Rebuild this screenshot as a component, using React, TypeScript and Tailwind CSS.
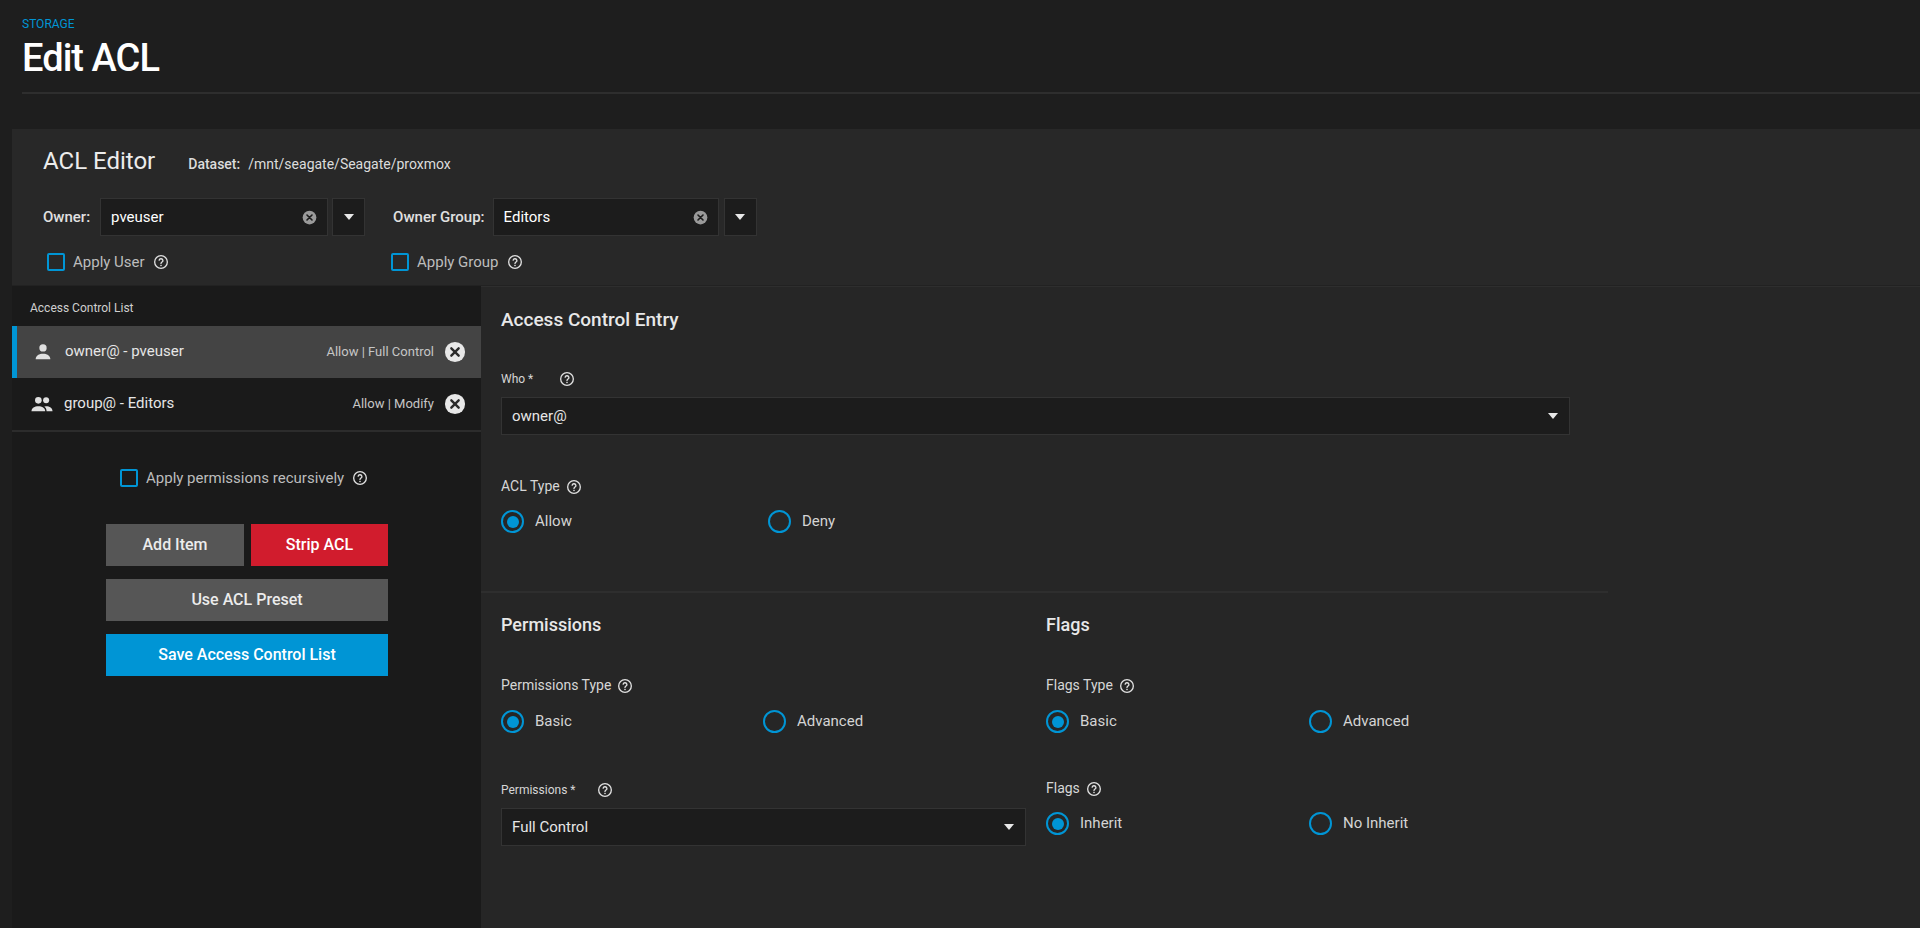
import React from 'react';

const Help = () => (
  <svg width="16" height="16" viewBox="0 0 24 24" className="inline-block shrink-0 text-[#e0e0e0]">
    <circle cx="12" cy="12" r="9.5" fill="none" stroke="currentColor" strokeWidth="2" />
    <path d="M9.2 9.3a2.9 2.9 0 0 1 5.7.7c0 1.9-2.9 2.4-2.9 4.3" fill="none" stroke="currentColor" strokeWidth="2" strokeLinecap="round" />
    <circle cx="12" cy="17.3" r="1.2" fill="currentColor" />
  </svg>
);

const Caret = () => (
  <svg width="12" height="8" viewBox="0 0 12 8"><path d="M1 1h10L6 7z" fill="#e8e8e8" /></svg>
);

const ClearIcon = () => (
  <svg width="15" height="15" viewBox="0 0 24 24">
    <circle cx="12" cy="12" r="11" fill="#9a9a9a" />
    <path d="M8 8l8 8M16 8l-8 8" stroke="#1c1c1c" strokeWidth="2.6" strokeLinecap="round" />
  </svg>
);

const RemoveIcon = () => (
  <svg width="22" height="22" viewBox="0 0 24 24">
    <circle cx="12" cy="12" r="11" fill="#e8e8e8" />
    <path d="M8 8l8 8M16 8l-8 8" stroke="#2a2a2a" strokeWidth="2.6" strokeLinecap="round" />
  </svg>
);

const Check = ({ label }: { label: string }) => (
  <div className="flex items-center gap-2">
    <span className="w-[18px] h-[18px] border-2 border-[#0095d5] rounded-[2px]" />
    <span className="text-[15px] text-[#bdbdbd]">{label}</span>
    <Help />
  </div>
);

const Radio = ({ label, on }: { label: string; on?: boolean }) => (
  <div className="flex items-center gap-[11px]">
    <span className="w-[23px] h-[23px] rounded-full border-2 border-[#0095d5] flex items-center justify-center">
      {on && <span className="w-[12px] h-[12px] rounded-full bg-[#0095d5]" />}
    </span>
    <span className="text-[15px] text-[#d4d4d4]">{label}</span>
  </div>
);

const Select = ({ value, w }: { value: string; w: string }) => (
  <div className={`${w} h-[38px] bg-[#1c1c1c] border border-[#333] flex items-center justify-between px-[10px]`}>
    <span className="text-[15px] text-[#e6e6e6]">{value}</span>
    <Caret />
  </div>
);

export default function App() {
  return (
    <div className="w-[1920px] h-[928px] bg-[#1e1e1e] text-white overflow-hidden" style={{ fontFamily: 'Roboto, "Liberation Sans", sans-serif' }}>
      <div className="pl-[22px] pt-[18px]">
        <div className="text-[12px] text-[#0095d5] leading-none">STORAGE</div>
        <div className="text-[38px] font-medium leading-none mt-[9px] tracking-tight">Edit ACL</div>
        <div className="mt-[15px] h-[2px] bg-[#2e2e2e]" />
      </div>
      <div className="ml-[12px] mt-[35px] bg-[#282828] h-[810px] flex flex-col">
        <div className="px-[31px] pt-[14px] pb-[11px] border-b border-[#222]">
          <div className="flex items-baseline">
            <span className="text-[24px] text-[#ececec]">ACL Editor</span>
            <span className="ml-[33px] text-[14px] font-medium text-[#dcdcdc]">Dataset:</span>
            <span className="ml-[8px] text-[14px] text-[#dcdcdc]">/mnt/seagate/Seagate/proxmox</span>
          </div>
          <div className="flex items-center mt-[19px]">
            <span className="text-[15px] text-[#e0e0e0] font-medium">Owner:</span>
            <div className="ml-[10px] w-[228px] h-[38px] bg-[#1c1c1c] border border-[#333] flex items-center justify-between px-[10px]">
              <span className="text-[15px]">pveuser</span>
              <ClearIcon />
            </div>
            <div className="ml-[4px] w-[33px] h-[38px] bg-[#1c1c1c] border border-[#333] flex items-center justify-center"><Caret /></div>
            <span className="ml-[28px] text-[15px] text-[#e0e0e0] font-medium">Owner Group:</span>
            <div className="ml-[8px] w-[226px] h-[38px] bg-[#1c1c1c] border border-[#333] flex items-center justify-between px-[10px]">
              <span className="text-[15px]">Editors</span>
              <ClearIcon />
            </div>
            <div className="ml-[5px] w-[33px] h-[38px] bg-[#1c1c1c] border border-[#333] flex items-center justify-center"><Caret /></div>
          </div>
          <div className="flex items-center mt-[15px] pl-[4px]">
            <div className="w-[344px]"><Check label="Apply User" /></div>
            <Check label="Apply Group" />
          </div>
        </div>
        <div className="flex flex-1">
          <div className="w-[469px] bg-[#1a1a1a] flex flex-col">
            <div className="h-[40px] flex items-end pb-[9px] pl-[18px] text-[12px] text-[#d0d0d0]">Access Control List</div>
            <div className="h-[52px] bg-[#444] border-l-[5px] border-[#0095d5] flex items-center pl-[15px] pr-[15px]">
              <svg width="22" height="22" viewBox="0 0 24 24" fill="#e0e0e0"><circle cx="12" cy="7.5" r="4" /><path d="M4 20c0-4 4-6 8-6s8 2 8 6z" /></svg>
              <span className="ml-[11px] text-[15px] text-[#e6e6e6]">owner@ - pveuser</span>
              <span className="ml-auto text-[13px] text-[#c6c6c6]">Allow | Full Control</span>
              <span className="ml-[10px]"><RemoveIcon /></span>
            </div>
            <div className="h-[54px] border-b-2 border-[#2c2c2c] flex items-center pl-[17px] pr-[15px]">
              <svg width="26" height="22" viewBox="0 0 26 24" fill="#e0e0e0"><circle cx="9" cy="8" r="3.6" /><circle cx="17.5" cy="8" r="3.3" /><path d="M1.5 20c0-3.6 3.5-5.5 7.5-5.5s7.5 1.9 7.5 5.5z" /><path d="M17.5 14.5c3.8 0 7 1.9 7 5.5h-6.5c0-2.2-.8-4-2.5-5.3z" /></svg>
              <span className="ml-[9px] text-[15px] text-[#e6e6e6]">group@ - Editors</span>
              <span className="ml-auto text-[13px] text-[#c6c6c6]">Allow | Modify</span>
              <span className="ml-[10px]"><RemoveIcon /></span>
            </div>
            <div className="pl-[108px] mt-[35px]"><Check label="Apply permissions recursively" /></div>
            <div className="pl-[94px] mt-[35px] w-[376px] flex flex-col gap-[13px] text-[16px] font-medium">
              <div className="flex gap-[7px]">
                <div className="w-[138px] h-[42px] bg-[#565656] flex items-center justify-center text-[#ececec]">Add Item</div>
                <div className="w-[137px] h-[42px] bg-[#d11c2d] flex items-center justify-center">Strip ACL</div>
              </div>
              <div className="h-[42px] bg-[#565656] flex items-center justify-center text-[#ececec]">Use ACL Preset</div>
              <div className="h-[42px] bg-[#0095d5] flex items-center justify-center">Save Access Control List</div>
            </div>
          </div>
          <div className="flex-1 bg-[#262626] border-t border-[#2e2e2e]">
            <div className="w-[1127px]">
              <div className="pl-[20px] pr-[38px] pb-[58px]">
                <div className="text-[19px] font-medium text-[#e8e8e8] pt-[19px]">Access Control Entry</div>
                <div className="flex items-center gap-[26px] mt-[36px] text-[12px] text-[#d6d6d6]">Who *<Help /></div>
                <div className="mt-[9px]"><Select value="owner@" w="w-[1069px]" /></div>
                <div className="flex items-center gap-[6px] mt-[41px] text-[14px] text-[#d6d6d6]">ACL Type<Help /></div>
                <div className="flex mt-[13px]">
                  <div className="w-[267px]"><Radio label="Allow" on /></div>
                  <Radio label="Deny" />
                </div>
              </div>
              <div className="h-[2px] bg-[#2e2e2e]" />
              <div className="flex pl-[20px] pt-[18px]">
                <div className="w-[545px]">
                  <div className="text-[18px] font-medium text-[#e8e8e8]">Permissions</div>
                  <div className="flex items-center gap-[6px] mt-[37px] text-[14px] text-[#d6d6d6]">Permissions Type<Help /></div>
                  <div className="flex mt-[14px]">
                    <div className="w-[262px]"><Radio label="Basic" on /></div>
                    <Radio label="Advanced" />
                  </div>
                  <div className="flex items-center gap-[22px] mt-[48px] text-[12px] text-[#d6d6d6]">Permissions *<Help /></div>
                  <div className="mt-[9px]"><Select value="Full Control" w="w-[525px]" /></div>
                </div>
                <div>
                  <div className="text-[18px] font-medium text-[#e8e8e8]">Flags</div>
                  <div className="flex items-center gap-[6px] mt-[37px] text-[14px] text-[#d6d6d6]">Flags Type<Help /></div>
                  <div className="flex mt-[14px]">
                    <div className="w-[263px]"><Radio label="Basic" on /></div>
                    <Radio label="Advanced" />
                  </div>
                  <div className="flex items-center gap-[6px] mt-[45px] text-[14px] text-[#d6d6d6]">Flags<Help /></div>
                  <div className="flex mt-[13px]">
                    <div className="w-[263px]"><Radio label="Inherit" on /></div>
                    <Radio label="No Inherit" />
                  </div>
                </div>
              </div>
            </div>
          </div>
        </div>
      </div>
    </div>
  );
}
